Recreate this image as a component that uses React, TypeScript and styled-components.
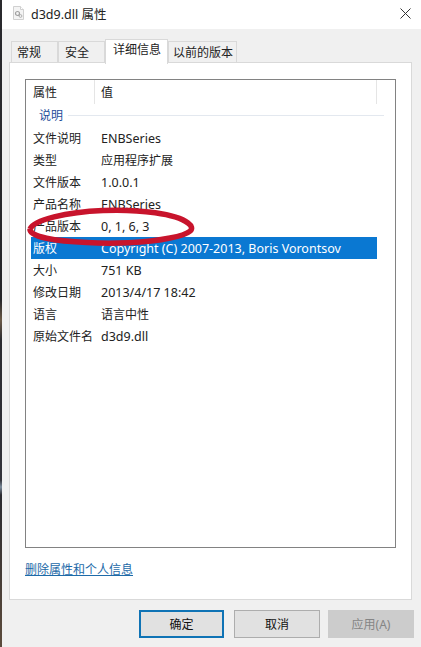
import React from 'react';
import styled, { createGlobalStyle } from 'styled-components';

const Global = createGlobalStyle`
  html, body { margin: 0; padding: 0; background: #f0f0f0; }
  body {
    width: 421px;
    height: 647px;
    overflow: hidden;
    font-family: "Noto Sans", "Noto Sans CJK SC", sans-serif;
    font-size: 12px;
    color: #1a1a1a;
  }
`;

const Screen = styled.div`
  display: flex;
  width: 421px;
  height: 647px;
  background: #f0f0f0;
`;

const DesktopEdge = styled.div`
  width: 2px;
  flex-shrink: 0;
  background: linear-gradient(#2a2a2e 0, #26262a 300px, #6b5a48 320px, #2b2b30 340px, #33333a 480px, #7b8a9a 487px, #2b2b30 495px, #5a4a3c 640px);
`;

const Dialog = styled.div`
  flex: 1;
  display: flex;
  flex-direction: column;
  min-width: 0;
`;

const TitleBar = styled.div`
  height: 29px;
  box-sizing: border-box;
  background: #fff;
  display: flex;
  align-items: center;
  padding: 0 10px 3px 10px;
  gap: 6px;
`;

const TitleText = styled.div`
  flex: 1;
  font-size: 12.5px;
  color: #222;
`;

const Content = styled.div`
  flex: 1;
  display: flex;
  flex-direction: column;
  padding: 10px 9px 0 7px;
`;

const TabRow = styled.div`
  display: flex;
  align-items: flex-end;
  height: 24px;
  padding-left: 2px;
  position: relative;
  z-index: 1;
  margin-bottom: -1px;
`;

const Tab = styled.div<{ $active?: boolean; $w: number; $pad: number }>`
  box-sizing: border-box;
  width: ${p => p.$w}px;
  height: ${p => (p.$active ? 25 : 22)}px;
  margin-bottom: ${p => (p.$active ? -1 : 0)}px;
  background: ${p => (p.$active ? '#fff' : '#f0f0f0')};
  border: 1px solid #d9d9d9;
  border-bottom: ${p => (p.$active ? 'none' : '1px solid #d9d9d9')};
  display: flex;
  align-items: center;
  padding-left: ${p => p.$pad}px;
  padding-bottom: ${p => (p.$active ? 7 : 1)}px;
  color: #222;
  white-space: nowrap;
`;

const Panel = styled.div`
  box-sizing: border-box;
  height: 538px;
  background: #fff;
  border: 1px solid #d9d9d9;
  padding: 16px 15px 0 15px;
  display: flex;
  flex-direction: column;
  position: relative;
`;

const ListBox = styled.div`
  box-sizing: border-box;
  height: 469px;
  border: 1px solid #828282;
  background: #fff;
  display: flex;
  flex-direction: column;
`;

const HeaderRow = styled.div`
  display: flex;
  height: 24px;
  flex-shrink: 0;
  padding-left: 1px;
`;

const HeaderCell = styled.div<{ $w: number }>`
  box-sizing: border-box;
  width: ${p => p.$w}px;
  padding-left: 6px;
  border-right: 1px solid #e5e5e5;
  display: flex;
  align-items: center;
  color: #222;
`;

const GroupRow = styled.div`
  height: 22px;
  display: flex;
  align-items: center;
  gap: 5px;
  padding: 0 11px 0 13px;
  margin-bottom: 1px;
  color: #1f4e9a;
`;

const GroupLine = styled.div`
  flex: 1;
  height: 1px;
  background: #e3e8ef;
`;

const Rows = styled.div`
  display: flex;
  flex-direction: column;
  padding-left: 5px;
  width: 346px;
`;

const Row = styled.div<{ $selected?: boolean }>`
  height: 22px;
  display: flex;
  align-items: center;
  padding-left: 2px;
  background: ${p => (p.$selected ? '#0a78d2' : 'transparent')};
  color: ${p => (p.$selected ? '#fff' : '#222')};
`;

const Label = styled.div`
  width: 68px;
  flex-shrink: 0;
  white-space: nowrap;
`;

const Value = styled.div<{ $cjk?: boolean }>`
  font-size: ${p => (p.$cjk ? 12 : 12.5)}px;
  white-space: nowrap;
`;

const Ellipse = styled.svg`
  position: absolute;
  left: 16px;
  top: 143px;
  pointer-events: none;
`;

const RemoveLink = styled.a`
  margin: 12px 0 0 0;
  color: #1d6aa8;
  text-decoration: underline;
`;

const Footer = styled.div`
  display: flex;
  justify-content: flex-end;
  padding: 10px 0 0 0;
  margin-right: -2px;
`;

const Button = styled.div<{ $primary?: boolean; $disabled?: boolean }>`
  box-sizing: border-box;
  width: ${p => (p.$primary ? 85 : 86)}px;
  height: 28px;
  margin-left: ${p => (p.$disabled ? 8 : 10)}px;
  padding-bottom: 1px;
  background: ${p => (p.$disabled ? '#cccccc' : '#e1e1e1')};
  border: ${p => (p.$primary ? '2px solid #0f73b5' : p.$disabled ? '1px solid #cccccc' : '1px solid #adadad')};
  color: ${p => (p.$disabled ? '#858585' : '#111')};
  display: flex;
  align-items: center;
  justify-content: center;
`;

const rows: [string, string][] = [
  ['文件说明', 'ENBSeries'],
  ['类型', '应用程序扩展'],
  ['文件版本', '1.0.0.1'],
  ['产品名称', 'ENBSeries'],
  ['产品版本', '0, 1, 6, 3'],
  ['版权', 'Copyright (C) 2007-2013, Boris Vorontsov'],
  ['大小', '751 KB'],
  ['修改日期', '2013/4/17 18:42'],
  ['语言', '语言中性'],
  ['原始文件名', 'd3d9.dll'],
];

const hasCjk = (s: string) => /[\u4e00-\u9fff]/.test(s);

const FileIcon = () => (
  <svg width="13" height="14" viewBox="0 0 13 14">
    <path d="M1.5 .5h7l3 3v10h-10z" fill="#f4f4f4" stroke="#d0d0d0" />
    <path d="M8.5 .5v3h3" fill="#fff" stroke="#d0d0d0" />
    <circle cx="5.5" cy="7.5" r="2" fill="none" stroke="#a0a0a0" strokeWidth="1.2" />
    <circle cx="8.5" cy="10" r="1.4" fill="none" stroke="#b0b0b0" />
  </svg>
);

const CloseIcon = () => (
  <svg width="11" height="11" viewBox="0 0 11 11">
    <path d="M.5 .5l10 10M10.5 .5l-10 10" stroke="#333" strokeWidth="1" fill="none" />
  </svg>
);

export default function App() {
  return (
    <Screen>
      <Global />
      <DesktopEdge />
      <Dialog>
        <TitleBar>
          <FileIcon />
          <TitleText>d3d9.dll 属性</TitleText>
          <CloseIcon />
        </TitleBar>
        <Content>
          <TabRow>
            <Tab $w={47} $pad={5}>常规</Tab>
            <Tab $w={47} $pad={6}>安全</Tab>
            <Tab $w={63} $pad={7} $active>详细信息</Tab>
            <Tab $w={69} $pad={4}>以前的版本</Tab>
          </TabRow>
          <Panel>
            <ListBox>
              <HeaderRow>
                <HeaderCell $w={68}>属性</HeaderCell>
                <HeaderCell $w={282}>值</HeaderCell>
              </HeaderRow>
              <GroupRow>说明<GroupLine /></GroupRow>
              <Rows>
                {rows.map(([k, v]) => (
                  <Row key={k} $selected={k === '版权'}>
                    <Label>{k}</Label>
                    <Value $cjk={hasCjk(v)}>{v}</Value>
                  </Row>
                ))}
              </Rows>
            </ListBox>
            <RemoveLink>删除属性和个人信息</RemoveLink>
            <Ellipse width="170" height="44" viewBox="0 0 170 44">
              <path
                d="M4 23C8 14 40 6 77 4.5C115 3 150 8 162 17C170 23 165 28 144 32C120 37 85 38 61 36.5C30 35 3 31 4 23"
                fill="none"
                stroke="#c8142c"
                strokeWidth="5.5"
              />
            </Ellipse>
          </Panel>
          <Footer>
            <Button $primary>确定</Button>
            <Button>取消</Button>
            <Button $disabled>应用(A)</Button>
          </Footer>
        </Content>
      </Dialog>
    </Screen>
  );
}
